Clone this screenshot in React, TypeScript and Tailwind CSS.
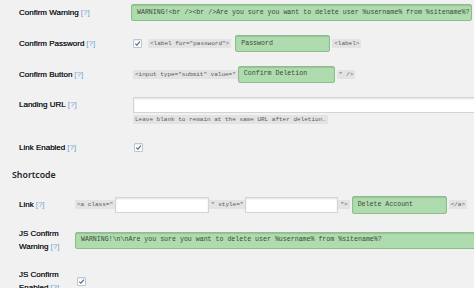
import type { ReactNode } from "react";

const mono = "font-['Liberation_Mono',monospace]";

function Help() {
	return <span className="ml-[2px] text-[#72a3d3] [text-shadow:none]">[?]</span>;
}

function Code({ children, className = "" }: { children: ReactNode; className?: string }) {
	return (
		<code
			className={`${mono} flex h-[9px] shrink-0 items-center whitespace-pre bg-[#e3e3e3] px-[2px] text-[6px] leading-[9px] text-[#5a5a5a] ${className}`}
		>
			{children}
		</code>
	);
}

function Filled({ value, className = "" }: { value: string; className?: string }) {
	return (
		<div
			className={`${mono} flex h-[17px] shrink-0 items-center whitespace-pre rounded-[2px] border border-[#8dbd8d] bg-[#aedcae] px-[5px] text-[6.6px] text-[#3b4a3b] shadow-[inset_0_1px_1px_rgba(0,0,0,0.12)] ${className}`}
		>
			{value}
		</div>
	);
}

function Blank({ className = "" }: { className?: string }) {
	return (
		<div
			className={`h-[16px] shrink-0 border border-[#d4d4d4] bg-white shadow-[inset_0_1px_2px_rgba(0,0,0,0.12)] ${className}`}
		/>
	);
}

function Check() {
	return (
		<span className="flex h-[9px] w-[9px] shrink-0 items-center justify-center rounded-[1px] border border-[#c4c4c4] bg-white shadow-[inset_0_1px_1px_rgba(0,0,0,0.08)]">
			<svg width="7" height="7" viewBox="0 0 10 10">
				<path
					d="M1.8 5.2 4.1 7.4 8.4 2.4"
					fill="none"
					stroke="#3d6d98"
					strokeWidth="1.6"
				/>
			</svg>
		</span>
	);
}

function Label({ children, wide = true }: { children: ReactNode; wide?: boolean }) {
	return (
		<div
			className={`shrink-0 pl-[19px] text-[8px] leading-[13px] text-[#1d2327] [text-shadow:0_0_0.3px_#1d2327] ${wide ? "w-[131px]" : "w-[75px]"}`}
		>
			{children}
		</div>
	);
}

export default function App() {
	return (
		<div className="relative h-[288px] w-[474px] overflow-hidden bg-[#f1f1f1] font-['Liberation_Sans','Noto_Sans',sans-serif]">
			<div className="flex flex-col pt-[4px]">
				<div className="flex h-[17px] items-center">
					<Label>
						Confirm Warning
						<Help />
					</Label>
					<Filled
						className="w-[341px]"
						value="WARNING!<br /><br />Are you sure you want to delete user %username% from %sitename%?"
					/>
				</div>

				<div className="mt-[14px] flex h-[17px] items-center">
					<Label>
						Confirm Password
						<Help />
					</Label>
					<div className="flex items-center pl-[2px]">
						<Check />
						<Code className="ml-[6px]">{'<label for="password">'}</Code>
						<Filled className="ml-[4px] w-[95px]" value="Password" />
						<Code className="ml-[2px]">{"<label>"}</Code>
					</div>
				</div>

				<div className="mt-[14px] flex h-[16px] items-center">
					<Label>
						Confirm Button
						<Help />
					</Label>
					<div className="flex items-center pl-[2px]">
						<Code>{'<input type="submit" value="'}</Code>
						<Filled className="h-[16px] w-[97px]" value="Confirm Deletion" />
						<Code className="ml-[2px]">{'" />'}</Code>
					</div>
				</div>

				<div className="mt-[15px] flex items-start">
					<div className="flex h-[15px] items-center">
						<Label>
							Landing URL
							<Help />
						</Label>
					</div>
					<div className="flex flex-col items-start pl-[2px]">
						<Blank className="h-[15px] w-[360px]" />
						<Code className="mt-[2px]">
							Leave blank to remain at the same URL after deletion.
						</Code>
					</div>
				</div>

				<div className="mt-[15px] flex h-[16px] items-center">
					<Label>
						Link Enabled
						<Help />
					</Label>
					<div className="pl-[3px]">
						<Check />
					</div>
				</div>

				<h2 className="mt-[13px] pl-[12px] font-['Noto_Sans',sans-serif] text-[8.8px] font-semibold leading-[14px] text-[#23282d]">
					Shortcode
				</h2>

				<div className="mt-[14px] flex h-[17px] items-center">
					<Label wide={false}>
						Link
						<Help />
					</Label>
					<div className="flex items-center">
						<Code>{'<a class="'}</Code>
						<Blank className="w-[94px]" />
						<Code>{'" style="'}</Code>
						<Blank className="w-[93px]" />
						<Code>{'">'}</Code>
						<Filled className="ml-[2px] h-[18px] w-[95px]" value="Delete Account" />
						<Code className="ml-[2px]">{"</a>"}</Code>
					</div>
				</div>

				<div className="mt-[14px] flex items-center">
					<Label wide={false}>
						JS Confirm
						<br />
						Warning
						<Help />
					</Label>
					<Filled
						className="h-[16px] w-[410px]"
						value="WARNING!\n\nAre you sure you want to delete user %username% from %sitename%?"
					/>
				</div>

				<div className="mt-[15px] flex items-center">
					<Label wide={false}>
						JS Confirm
						<br />
						Enabled
						<Help />
					</Label>
					<div className="pl-[2px]">
						<Check />
					</div>
				</div>
			</div>
		</div>
	);
}
